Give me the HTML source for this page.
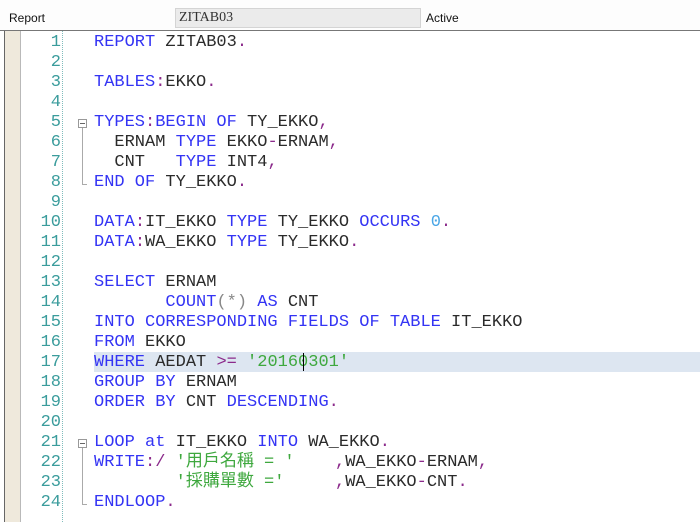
<!DOCTYPE html>
<html><head><meta charset="utf-8"><style>
body{margin:0;width:700px;height:522px;overflow:hidden;background:#fff;position:relative;font-family:"Liberation Sans",sans-serif}
.hdr{position:absolute;left:0;top:0;width:700px;height:30px;background:#fdfdfd;border-bottom:1px solid #777}
.lbl{position:absolute;top:11px;font-size:12px;color:#111}
.box{position:absolute;left:175px;top:8px;width:246px;height:20px;background:#ebebeb;border:1px solid #d4d4d4;box-sizing:border-box;font-family:"Liberation Serif",serif;font-size:14px;color:#333;padding:1px 0 0 3px}
.lborder{position:absolute;left:4px;top:31px;width:1px;height:491px;background:#666}
.gut{position:absolute;left:5px;top:31px;width:15px;height:491px;background:#efe9dc;border-right:1px solid #b9b9b9}
.dots{position:absolute;left:62px;top:31px;height:491px;border-left:1px dotted #7fbcbc}
.hl{position:absolute;left:94px;top:352px;width:606px;height:20px;background:#dde6f1}
.cur{position:absolute;left:303px;top:353px;width:1px;height:18px;background:#000}
.L{position:absolute;left:0;top:2px;width:700px;height:522px}
.n{position:absolute;right:639px;font-family:"Liberation Mono",monospace;font-size:17px;color:#3a9c9c;line-height:20px}
.c{position:absolute;left:94px;font-family:"Liberation Mono","Noto Sans CJK TC",monospace;font-size:17px;line-height:20px;white-space:pre;color:#2b2b2b}
.k{color:#3434f4}.p{color:#8b2a8b}.s{color:#3ea83e}.d{color:#4aa6e6}.g{color:#888}
.fb{position:absolute;left:78px;width:9px;height:9px;border:1px solid #999;box-sizing:border-box;background:#fff}
.fb:after{content:"";position:absolute;left:1px;top:3px;width:5px;height:1px;background:#666}
.vl{position:absolute;left:82px;width:1px;background:#aaa}
.hk{position:absolute;left:82px;width:5px;height:1px;background:#aaa}
</style></head><body>
<div class="hdr"></div>
<div class="lbl" style="left:9px">Report</div>
<div class="box">ZITAB03</div>
<div class="lbl" style="left:426px">Active</div>
<div class="lborder"></div><div class="gut"></div><div class="dots"></div>
<div class="hl"></div>
<div class="L">
<div class="n" style="top:31px">1</div><div class="n" style="top:51px">2</div><div class="n" style="top:71px">3</div><div class="n" style="top:91px">4</div><div class="n" style="top:111px">5</div><div class="n" style="top:131px">6</div><div class="n" style="top:151px">7</div><div class="n" style="top:171px">8</div><div class="n" style="top:191px">9</div><div class="n" style="top:211px">10</div><div class="n" style="top:231px">11</div><div class="n" style="top:251px">12</div><div class="n" style="top:271px">13</div><div class="n" style="top:291px">14</div><div class="n" style="top:311px">15</div><div class="n" style="top:331px">16</div><div class="n" style="top:351px">17</div><div class="n" style="top:371px">18</div><div class="n" style="top:391px">19</div><div class="n" style="top:411px">20</div><div class="n" style="top:431px">21</div><div class="n" style="top:451px">22</div><div class="n" style="top:471px">23</div><div class="n" style="top:491px">24</div>

<div class="fb" style="top:117px"></div><div class="vl" style="top:126px;height:56px"></div><div class="hk" style="top:182px"></div>
<div class="fb" style="top:437px"></div><div class="vl" style="top:446px;height:56px"></div><div class="hk" style="top:502px"></div>

<div class="c" style="top:31px"><span class="k">REPORT</span> ZITAB03<span class="p">.</span></div>
<div class="c" style="top:71px"><span class="k">TABLES</span><span class="p">:</span>EKKO<span class="p">.</span></div>
<div class="c" style="top:111px"><span class="k">TYPES</span><span class="p">:</span><span class="k">BEGIN OF</span> TY_EKKO<span class="p">,</span></div>
<div class="c" style="top:131px">  ERNAM <span class="k">TYPE</span> EKKO<span class="p">-</span>ERNAM<span class="p">,</span></div>
<div class="c" style="top:151px">  CNT   <span class="k">TYPE</span> INT4<span class="p">,</span></div>
<div class="c" style="top:171px"><span class="k">END OF</span> TY_EKKO<span class="p">.</span></div>
<div class="c" style="top:211px"><span class="k">DATA</span><span class="p">:</span>IT_EKKO <span class="k">TYPE</span> TY_EKKO <span class="k">OCCURS</span> <span class="d">0</span><span class="p">.</span></div>
<div class="c" style="top:231px"><span class="k">DATA</span><span class="p">:</span>WA_EKKO <span class="k">TYPE</span> TY_EKKO<span class="p">.</span></div>
<div class="c" style="top:271px"><span class="k">SELECT</span> ERNAM</div>
<div class="c" style="top:291px">       <span class="k">COUNT</span><span class="g">(*)</span> <span class="k">AS</span> CNT</div>
<div class="c" style="top:311px"><span class="k">INTO CORRESPONDING FIELDS OF TABLE</span> IT_EKKO</div>
<div class="c" style="top:331px"><span class="k">FROM</span> EKKO</div>
<div class="c" style="top:351px"><span class="k">WHERE</span> AEDAT <span class="p">&gt;=</span> <span class="s">'20160301'</span></div>
<div class="c" style="top:371px"><span class="k">GROUP BY</span> ERNAM</div>
<div class="c" style="top:391px"><span class="k">ORDER BY</span> CNT <span class="k">DESCENDING</span><span class="p">.</span></div>
<div class="c" style="top:431px"><span class="k">LOOP at</span> IT_EKKO <span class="k">INTO</span> WA_EKKO<span class="p">.</span></div>
<div class="c" style="top:451px"><span class="k">WRITE</span><span class="p">:/</span> <span class="s">'用戶名稱 = '</span></div>
<div class="c" style="top:451px;left:335px"><span class="p">,</span>WA_EKKO<span class="p">-</span>ERNAM<span class="p">,</span></div>
<div class="c" style="top:471px">        <span class="s">'採購單數 ='</span></div>
<div class="c" style="top:471px;left:335px"><span class="p">,</span>WA_EKKO<span class="p">-</span>CNT<span class="p">.</span></div>
<div class="c" style="top:491px"><span class="k">ENDLOOP</span><span class="p">.</span></div>
</div>
<div class="cur"></div>
</body></html>
